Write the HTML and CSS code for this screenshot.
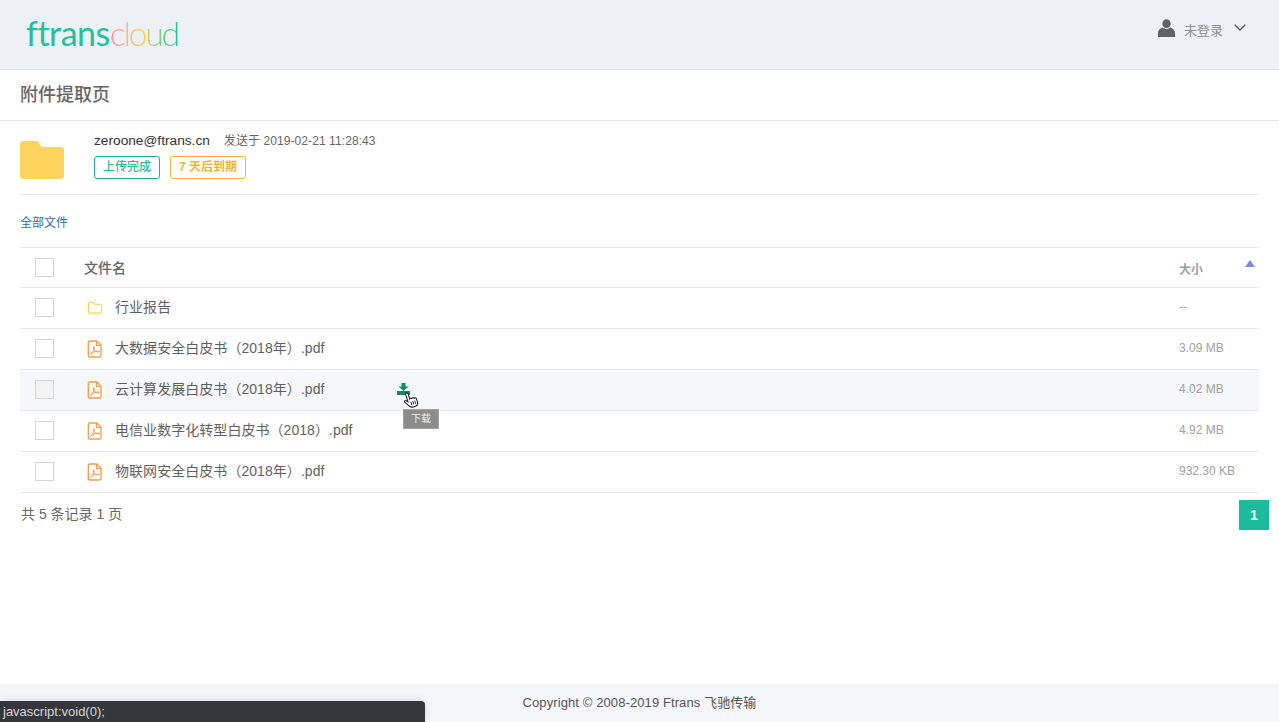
FILE: index.html
```html
<!DOCTYPE html>
<html lang="zh-CN">
<head>
<meta charset="utf-8">
<title>附件提取页</title>
<link rel="stylesheet" href="styles.css">
</head>
<body>
<div class="page">
  <header class="topbar">
    <div class="logo"><span class="logo-a">ftrans</span><span class="logo-b">cloud</span></div>
    <div class="user">
      <svg class="user-icon" viewBox="0 0 16 16" width="17" height="18" preserveAspectRatio="none"><circle cx="8" cy="4.2" r="3.9" fill="#5f6367"/><path d="M0 16v-3.2C0 9.8 2.5 8 4.5 7.600c1 .9 2.200 1.300 3.500 1.300s2.500-.4 3.500-1.300C13.500 8 16 9.800 16 12.800V16z" fill="#5f6367"/></svg>
      <span class="user-name">未登录</span>
      <svg class="chev" viewBox="0 0 12 7" width="12" height="7"><path d="M.7.7 6 6l5.300-5.300" fill="none" stroke="#55595d" stroke-width="1.300"/></svg>
    </div>
  </header>
  <div class="title-bar">附件提取页</div>
  <main class="content">
    <section class="info">
      <svg class="big-folder" viewBox="0 0 44 38" width="44" height="38"><path d="M3 0h13c1.500 0 2.300.6 3 1.700L21.500 6H41c1.700 0 3 1.300 3 3v26c0 1.700-1.300 3-3 3H3c-1.700 0-3-1.300-3-3V3c0-1.700 1.300-3 3-3z" fill="#ffd45c"/></svg>
      <div class="info-text">
        <div class="info-line"><span class="sender">zeroone@ftrans.cn</span><span class="sent">发送于 2019-02-21 11:28:43</span></div>
        <div class="tags"><span class="tag tag-green">上传完成</span><span class="tag tag-orange">7 天后到期</span></div>
      </div>
    </section>
    <div class="crumb"><a href="#">全部文件</a></div>
    <div class="table">
      <div class="row head">
        <span class="check"></span><span class="name-head">文件名</span>
        <span class="size-head">大小</span><span class="sort"></span>
      </div>
      <div class="row">
        <span class="check"></span>
        <svg class="file-icon folder-icon" viewBox="0 0 16 14" width="16" height="13"><path d="M1 3c0-.8.6-1.500 1.500-1.500h3.300L7.300 3.500h6.200c.9 0 1.500.6 1.500 1.500v6.500c0 .9-.6 1.500-1.500 1.500h-11C1.600 13 1 12.400 1 11.500z" fill="none" stroke="#fbd04e" stroke-width="1.200"/></svg>
        <span class="fname">行业报告</span><span class="fsize">--</span>
      </div>
      <div class="row">
        <span class="check"></span>
        <svg class="file-icon" viewBox="0 0 16 18" width="16" height="18"><use href="#pdf"/></svg>
        <span class="fname">大数据安全白皮书（2018年）.pdf</span><span class="fsize">3.09 MB</span>
      </div>
      <div class="row hover">
        <span class="check"></span>
        <svg class="file-icon" viewBox="0 0 16 18" width="16" height="18"><use href="#pdf"/></svg>
        <span class="fname">云计算发展白皮书（2018年）.pdf</span><span class="fsize">4.02 MB</span>
        <svg class="dl" viewBox="0 0 13 12" width="13" height="12"><path d="M4.500 0h4v3.500h3L6.500 8h6.500v4H0V8h6.500L1.500 3.500h3z" fill="#128a68"/></svg>
        <svg class="hand" viewBox="0 0 17 19" width="16" height="18"><g transform="rotate(-18 8 10)"><path d="M5 10.500 3.300 8.700c-1-.9-2.300.2-1.500 1.400l2.700 4.400c.9 1.600 2 2.900 4 2.900h2.500c2.500 0 3.500-1.700 3.500-4V10c0-1.400-1.700-1.700-2.200-.7 0-1.300-1.800-1.600-2.300-.6 0-1.300-1.700-1.500-2.300-.6V2.500c0-1.900-2.700-1.900-2.700 0z" fill="#fff" stroke="#1a1a1a" stroke-width="1.100"/><path d="M7.900 11.500v3.600M10 11.500v3.600M12.100 11.500v3.600" stroke="#1a1a1a" stroke-width=".9"/></g></svg>
        <span class="tip">下载</span>
      </div>
      <div class="row">
        <span class="check"></span>
        <svg class="file-icon" viewBox="0 0 16 18" width="16" height="18"><use href="#pdf"/></svg>
        <span class="fname">电信业数字化转型白皮书（2018）.pdf</span><span class="fsize">4.92 MB</span>
      </div>
      <div class="row">
        <span class="check"></span>
        <svg class="file-icon" viewBox="0 0 16 18" width="16" height="18"><use href="#pdf"/></svg>
        <span class="fname">物联网安全白皮书（2018年）.pdf</span><span class="fsize">932.30 KB</span>
      </div>
    </div>
    <div class="pager">
      <span class="count">共 5 条记录 1 页</span>
      <span class="page-num">1</span>
    </div>
  </main>
  <footer class="footer">Copyright © 2008-2019 Ftrans 飞驰传输</footer>
  <div class="status">javascript:void(0);</div>
</div>
<svg class="defs" width="0" height="0" aria-hidden="true">
  <symbol id="pdf" viewBox="0 0 16 18">
    <path d="M2.800 1h7l4.200 4.200v10.300c0 .9-.6 1.500-1.500 1.500H2.800c-.9 0-1.500-.6-1.500-1.500v-13C1.300 1.600 1.900 1 2.800 1z" fill="none" stroke="#f39a4a" stroke-width="1.300"/>
    <path d="M9.500 1.200v4.300h4.300" fill="none" stroke="#f39a4a" stroke-width="1.200"/>
    <path d="M3.500 14.500c1.500-.8 3.200-3.800 3.800-6.800.3-1.500-1-1.500-.9 0 .2 2.400 2.300 4.300 5.100 4.300 1.300 0 1.300-1-.1-1-2.300 0-5.700 1.200-7.300 2.500-.8.600-.9 1.300-.6 1z" fill="none" stroke="#f39a4a" stroke-width="1"/>
  </symbol>
</svg>
</body>
</html>
```
FILE: styles.css
```css
* { box-sizing: border-box; }
html, body { margin: 0; padding: 0; height: 100%; }
body {
  font-family: "Liberation Sans", "Noto Sans CJK SC", sans-serif;
  color: #555;
  background: #fff;
  overflow: hidden;
}
.page { position: relative; height: 722px; display: flex; flex-direction: column; }
.defs { position: absolute; }

.topbar {
  height: 70px;
  background: #edf1f5;
  border-bottom: 1px solid #e0e3e7;
  display: flex;
  justify-content: space-between;
  align-items: flex-start;
  flex: none;
}
.logo { margin: 13px 0 0 26px; font-family: Lato, sans-serif; font-size: 34px; line-height: 40px; letter-spacing: -.5px; }
.logo-a { color: #22c19c; font-weight: 400; }
.logo-b {
  font-weight: 300;
  letter-spacing: -2.400px;
  background: linear-gradient(90deg, #ff8f9a 0%, #fdb58f 25%, #f8d04c 50%, #7fcf86 72%, #22c3a0 100%);
  -webkit-background-clip: text;
  background-clip: text;
  color: transparent;
}
.user { display: flex; align-items: center; margin: 17px 33px 0 0; height: 22px; }
.user-icon { margin-right: 9px; }
.user-name { font-size: 13px; color: #8a8d91; margin-right: 11px; margin-top: 3px; }
.chev { margin-top: -1px; }

.title-bar {
  height: 51px;
  flex: none;
  padding-left: 20px;
  font-size: 18px;
  font-weight: 500;
  line-height: 50px;
  color: #666;
  border-bottom: 1px solid #e7e9ed;
}
.content { flex: 1; padding: 0 10px 0 20px; }
.info {
  height: 74px;
  margin-right: 10px;
  border-bottom: 1px solid #e7e9ed;
  display: flex;
  align-items: flex-start;
}
.big-folder { margin-top: 20px; flex: none; }
.info-text { margin: 10px 0 0 30px; }
.info-line { display: flex; align-items: baseline; height: 19px; }
.sender { font-size: 13.7px; color: #333; margin-right: 14px; }
.sent { font-size: 12px; letter-spacing: .08px; color: #666; }
.tags { display: flex; gap: 10px; margin-top: 6px; }
.tag {
  height: 23px;
  padding: 0 8px;
  font-size: 12px;
  font-weight: 500;
  line-height: 21px;
  border: 1px solid;
  border-radius: 3px;
}
.tag-green { color: #1fc09a; border-color: #1ab394; }
.tag-orange { color: #f8b133; border-color: #f8b133; font-weight: 700; }

.crumb { height: 52px; padding-top: 20px; font-size: 12px; line-height: 17px; }
.crumb a { color: #2a6db0; text-decoration: none; }

.table { margin-right: 10px; border-top: 1px solid #e7e9ed; }
.row {
  position: relative;
  height: 41px;
  display: flex;
  align-items: center;
  border-bottom: 1px solid #e7eaec;
}
.row.head { height: 40px; }
.row.hover { background: #f6f7f9; }
.check {
  width: 19px;
  height: 19px;
  margin: 0 0 2px 15px;
  border: 1px solid #d5d5d5;
  background: #fff;
  flex: none;
}
.head .check { margin-bottom: 0; }
.row.hover .check { background: #f3f3f4; }
.name-head { margin: 0 0 2px 30px; font-size: 14px; font-weight: 500; color: #666; }
.size-head { position: absolute; left: 1159px; top: 12px; font-size: 12px; font-weight: 700; color: #a0a0a0; }
.sort {
  position: absolute;
  left: 1225px;
  top: 12px;
  border-left: 5px solid transparent;
  border-right: 5px solid transparent;
  border-bottom: 7px solid #7f88e0;
}
.file-icon { margin-left: 33px; flex: none; }
.folder-icon { margin-bottom: 2px; }
.fname { margin: 0 0 4px 12px; font-size: 14px; letter-spacing: .05px; color: #5f5f5f; }
.fsize { position: absolute; left: 1159px; margin-bottom: 2px; font-size: 12px; color: #a0a0a0; }

.dl { position: absolute; left: 377px; top: 13px; }
.hand { position: absolute; left: 383px; top: 21px; z-index: 2; }
.tip {
  position: absolute;
  left: 383px;
  top: 39px;
  width: 36px;
  height: 20px;
  background: #8c8c8c;
  border: 1px solid #a2a2a2;
  color: #eee;
  font-size: 10px;
  line-height: 18px;
  text-align: center;
  z-index: 1;
}

.pager { display: flex; justify-content: space-between; margin-top: 7px; padding-left: 1px; }
.count { font-size: 14px; color: #666; line-height: 29px; }
.page-num {
  width: 30px;
  height: 30px;
  background: #1abc9c;
  color: #fff;
  font-size: 14px;
  font-weight: 700;
  line-height: 30px;
  text-align: center;
}

.footer {
  height: 38px;
  flex: none;
  background: #f4f6fa;
  text-align: center;
  font-size: 13px;
  letter-spacing: .1px;
  line-height: 37px;
  color: #555;
}
.status {
  position: absolute;
  left: 0;
  bottom: 0;
  width: 425px;
  height: 21px;
  background: #33363a;
  border-top-right-radius: 4px;
  color: #d8d8d8;
  font-size: 13px;
  line-height: 22px;
  padding-left: 3px;
  box-shadow: 0 0 8px rgba(0,0,0,.12);
}
```
